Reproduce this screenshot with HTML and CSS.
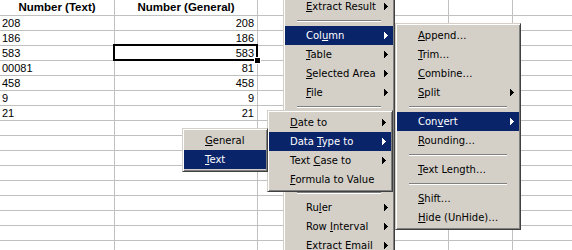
FILE: index.html
```html
<!DOCTYPE html>
<html>
<head>
<meta charset="utf-8">
<title>Convert menu</title>
<link rel="stylesheet" href="styles.css">
</head>
<body>
<div class="screen">
  <div class="sheet">
    <div class="row head"><div class="c">Number (Text)</div><div class="c">Number (General)</div><div class="c"></div><div class="c"></div><div class="c"></div><div class="c"></div><div class="c"></div></div>
    <div class="row"><div class="c">208</div><div class="c n">208</div><div class="c"></div><div class="c"></div><div class="c"></div><div class="c"></div><div class="c"></div></div>
    <div class="row"><div class="c">186</div><div class="c n">186</div><div class="c"></div><div class="c"></div><div class="c"></div><div class="c"></div><div class="c"></div></div>
    <div class="row"><div class="c">583</div><div class="c n sel">583</div><div class="c"></div><div class="c"></div><div class="c"></div><div class="c"></div><div class="c"></div></div>
    <div class="row"><div class="c">00081</div><div class="c n">81</div><div class="c"></div><div class="c"></div><div class="c"></div><div class="c"></div><div class="c"></div></div>
    <div class="row"><div class="c">458</div><div class="c n">458</div><div class="c"></div><div class="c"></div><div class="c"></div><div class="c"></div><div class="c"></div></div>
    <div class="row"><div class="c">9</div><div class="c n">9</div><div class="c"></div><div class="c"></div><div class="c"></div><div class="c"></div><div class="c"></div></div>
    <div class="row"><div class="c">21</div><div class="c n">21</div><div class="c"></div><div class="c"></div><div class="c"></div><div class="c"></div><div class="c"></div></div>
    <div class="row"><div class="c"></div><div class="c"></div><div class="c"></div><div class="c"></div><div class="c"></div><div class="c"></div><div class="c"></div></div>
    <div class="row"><div class="c"></div><div class="c"></div><div class="c"></div><div class="c"></div><div class="c"></div><div class="c"></div><div class="c"></div></div>
    <div class="row"><div class="c"></div><div class="c"></div><div class="c"></div><div class="c"></div><div class="c"></div><div class="c"></div><div class="c"></div></div>
    <div class="row"><div class="c"></div><div class="c"></div><div class="c"></div><div class="c"></div><div class="c"></div><div class="c"></div><div class="c"></div></div>
    <div class="row"><div class="c"></div><div class="c"></div><div class="c"></div><div class="c"></div><div class="c"></div><div class="c"></div><div class="c"></div></div>
    <div class="row"><div class="c"></div><div class="c"></div><div class="c"></div><div class="c"></div><div class="c"></div><div class="c"></div><div class="c"></div></div>
    <div class="row"><div class="c"></div><div class="c"></div><div class="c"></div><div class="c"></div><div class="c"></div><div class="c"></div><div class="c"></div></div>
    <div class="row"><div class="c"></div><div class="c"></div><div class="c"></div><div class="c"></div><div class="c"></div><div class="c"></div><div class="c"></div></div>
    <div class="row"><div class="c"></div><div class="c"></div><div class="c"></div><div class="c"></div><div class="c"></div><div class="c"></div><div class="c"></div></div>
  </div>

  <div class="menu m-main">
    <div class="mi"><span><u>E</u>xtract Result</span><svg class="arr" viewBox="0 0 4 7"><path d="M0 0h1v7H0zM1 1h1v5H1zM2 2h1v3H2zM3 3h1v1H3z"/></svg></div>
    <div class="sep"></div>
    <div class="mi on"><span>Col<u>u</u>mn</span><svg class="arr" viewBox="0 0 4 7"><path d="M0 0h1v7H0zM1 1h1v5H1zM2 2h1v3H2zM3 3h1v1H3z"/></svg></div>
    <div class="mi"><span><u>T</u>able</span><svg class="arr" viewBox="0 0 4 7"><path d="M0 0h1v7H0zM1 1h1v5H1zM2 2h1v3H2zM3 3h1v1H3z"/></svg></div>
    <div class="mi"><span><u>S</u>elected Area</span><svg class="arr" viewBox="0 0 4 7"><path d="M0 0h1v7H0zM1 1h1v5H1zM2 2h1v3H2zM3 3h1v1H3z"/></svg></div>
    <div class="mi"><span><u>F</u>ile</span><svg class="arr" viewBox="0 0 4 7"><path d="M0 0h1v7H0zM1 1h1v5H1zM2 2h1v3H2zM3 3h1v1H3z"/></svg></div>
    <div class="sep"></div>
    <div class="gap" aria-hidden="true"></div>
    <div class="sep"></div>
    <div class="mi"><span>Ru<u>l</u>er</span><svg class="arr" viewBox="0 0 4 7"><path d="M0 0h1v7H0zM1 1h1v5H1zM2 2h1v3H2zM3 3h1v1H3z"/></svg></div>
    <div class="mi"><span>Row <u>I</u>nterval</span><svg class="arr" viewBox="0 0 4 7"><path d="M0 0h1v7H0zM1 1h1v5H1zM2 2h1v3H2zM3 3h1v1H3z"/></svg></div>
    <div class="mi"><span>Extract <u>E</u>mail</span><svg class="arr" viewBox="0 0 4 7"><path d="M0 0h1v7H0zM1 1h1v5H1zM2 2h1v3H2zM3 3h1v1H3z"/></svg></div>
  </div>

  <div class="menu m-col">
    <div class="mi"><span><u>A</u>ppend…</span></div>
    <div class="mi"><span><u>T</u>rim…</span></div>
    <div class="mi"><span><u>C</u>ombine…</span></div>
    <div class="mi"><span><u>S</u>plit</span><svg class="arr" viewBox="0 0 4 7"><path d="M0 0h1v7H0zM1 1h1v5H1zM2 2h1v3H2zM3 3h1v1H3z"/></svg></div>
    <div class="sep"></div>
    <div class="mi on"><span>Con<u>v</u>ert</span><svg class="arr" viewBox="0 0 4 7"><path d="M0 0h1v7H0zM1 1h1v5H1zM2 2h1v3H2zM3 3h1v1H3z"/></svg></div>
    <div class="mi"><span><u>R</u>ounding…</span></div>
    <div class="sep"></div>
    <div class="mi"><span><u>T</u>ext Length…</span></div>
    <div class="sep"></div>
    <div class="mi"><span><u>S</u>hift…</span></div>
    <div class="mi"><span><u>H</u>ide (UnHide)…</span></div>
  </div>

  <div class="menu m-date">
    <div class="mi"><span><u>D</u>ate to</span><svg class="arr" viewBox="0 0 4 7"><path d="M0 0h1v7H0zM1 1h1v5H1zM2 2h1v3H2zM3 3h1v1H3z"/></svg></div>
    <div class="mi on"><span>Data <u>T</u>ype to</span><svg class="arr" viewBox="0 0 4 7"><path d="M0 0h1v7H0zM1 1h1v5H1zM2 2h1v3H2zM3 3h1v1H3z"/></svg></div>
    <div class="mi"><span>Text <u>C</u>ase to</span><svg class="arr" viewBox="0 0 4 7"><path d="M0 0h1v7H0zM1 1h1v5H1zM2 2h1v3H2zM3 3h1v1H3z"/></svg></div>
    <div class="mi"><span><u>F</u>ormula to Value</span></div>
  </div>

  <div class="menu m-type">
    <div class="mi"><span><u>G</u>eneral</span></div>
    <div class="mi on"><span><u>T</u>ext</span></div>
  </div>
</div>
</body>
</html>
```
FILE: styles.css
```css
html, body {
  margin: 0;
  padding: 0;
  background: #fff;
}

.screen {
  position: relative;
  width: 572px;
  height: 250px;
  overflow: hidden;
  font-family: "Liberation Sans", Arial, sans-serif;
  color: #000;
}

.sheet {
  display: flex;
  flex-direction: column;
}

.row {
  display: grid;
  grid-template-columns: 115px 143px 63px 64px 64px 64px 64px;
  height: 15px;
  flex: none;
}

.row.head {
  height: 16px;
}

.c {
  box-sizing: border-box;
  border-right: 1px solid #c0c0c0;
  border-bottom: 1px solid #c0c0c0;
  padding: 0 2px;
  font-size: 11px;
  line-height: 14px;
  white-space: nowrap;
  overflow: hidden;
}

.head .c {
  font-weight: bold;
  font-size: 11.5px;
  line-height: 15px;
  text-align: center;
}

.c.n {
  text-align: right;
  padding-right: 3px;
}

.c.sel {
  position: relative;
  overflow: visible;
}

.c.sel::after {
  content: "";
  position: absolute;
  left: -2px;
  top: -2px;
  right: -1px;
  bottom: -1px;
  border: 2px solid #000;
}

.c.sel::before {
  content: "";
  position: absolute;
  right: -3px;
  bottom: -3px;
  width: 5px;
  height: 5px;
  background: #000;
  box-shadow: 0 0 0 1px #fff;
  z-index: 1;
}

/* classic popup menus */
.menu {
  position: absolute;
  box-sizing: border-box;
  background: #d4d0c8;
  border: 1px solid;
  border-color: #d4d0c8 #404040 #404040 #d4d0c8;
  box-shadow: inset 1px 1px #fff, inset -1px -1px #808080;
  padding: 2px 1px;
  font-family: "DejaVu Sans", sans-serif;
  font-size: 10px;
  color: #000;
}

.m-main { left: 283px; top: -6px; width: 112px; }
.m-col  { left: 395px; top: 23px; width: 126px; }
.m-date { left: 267px; top: 110px; width: 126px; }
.m-type { left: 182px; top: 128px; width: 86px; }

.mi {
  display: flex;
  align-items: center;
  justify-content: space-between;
  height: 19px;
  padding: 0 5px 0 21px;
  white-space: nowrap;
}

.mi.on {
  background: #0a246a;
  color: #fff;
}

.mi u {
  text-decoration: underline;
  text-underline-offset: 1px;
}

.arr {
  display: block;
  width: 4px;
  height: 7px;
  fill: currentColor;
  shape-rendering: crispEdges;
  flex: none;
}

.sep {
  padding: 4px 12px;
}

.sep::before {
  content: "";
  display: block;
  border-top: 1px solid #808080;
  border-bottom: 1px solid #fff;
}

.gap {
  height: 76px;
}
```
